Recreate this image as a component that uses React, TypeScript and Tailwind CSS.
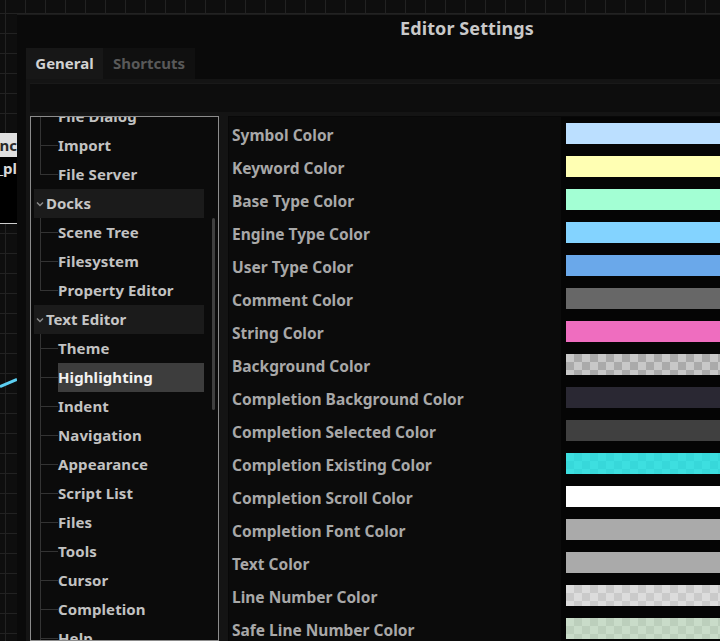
import React from 'react';

type TreeRow =
  | { kind: 'cat'; label: string }
  | { kind: 'item'; label: string; last?: boolean; selected?: boolean };

const TREE: TreeRow[] = [
  { kind: 'item', label: 'File Dialog' },
  { kind: 'item', label: 'Import' },
  { kind: 'item', label: 'File Server', last: true },
  { kind: 'cat', label: 'Docks' },
  { kind: 'item', label: 'Scene Tree' },
  { kind: 'item', label: 'Filesystem' },
  { kind: 'item', label: 'Property Editor', last: true },
  { kind: 'cat', label: 'Text Editor' },
  { kind: 'item', label: 'Theme' },
  { kind: 'item', label: 'Highlighting', selected: true },
  { kind: 'item', label: 'Indent' },
  { kind: 'item', label: 'Navigation' },
  { kind: 'item', label: 'Appearance' },
  { kind: 'item', label: 'Script List' },
  { kind: 'item', label: 'Files' },
  { kind: 'item', label: 'Tools' },
  { kind: 'item', label: 'Cursor' },
  { kind: 'item', label: 'Completion' },
  { kind: 'item', label: 'Help' },
];

const PROPS: { label: string; swatch: string }[] = [
  { label: 'Symbol Color', swatch: 'bg-[#bbdfff]' },
  { label: 'Keyword Color', swatch: 'bg-[#ffffb3]' },
  { label: 'Base Type Color', swatch: 'bg-[#a3ffd4]' },
  { label: 'Engine Type Color', swatch: 'bg-[#83d3ff]' },
  { label: 'User Type Color', swatch: 'bg-[#6aa8ea]' },
  { label: 'Comment Color', swatch: 'bg-[#676767]' },
  { label: 'String Color', swatch: 'bg-[#ef6dbf]' },
  { label: 'Background Color', swatch: 'bg-[conic-gradient(#aaaaaa_25%,#c8c8c8_0_50%,#aaaaaa_0_75%,#c8c8c8_0)] bg-[size:16px_16px]' },
  { label: 'Completion Background Color', swatch: 'bg-[#2a2833]' },
  { label: 'Completion Selected Color', swatch: 'bg-[#404040]' },
  { label: 'Completion Existing Color', swatch: 'bg-[conic-gradient(#37d8da_25%,#3ddfe0_0_50%,#37d8da_0_75%,#3ddfe0_0)] bg-[size:16px_16px]' },
  { label: 'Completion Scroll Color', swatch: 'bg-[#ffffff]' },
  { label: 'Completion Font Color', swatch: 'bg-[#aaaaaa]' },
  { label: 'Text Color', swatch: 'bg-[#aaaaaa]' },
  { label: 'Line Number Color', swatch: 'bg-[conic-gradient(#cacaca_25%,#dcdcdc_0_50%,#cacaca_0_75%,#dcdcdc_0)] bg-[size:16px_16px]' },
  { label: 'Safe Line Number Color', swatch: 'bg-[conic-gradient(#bccfbc_25%,#c9dcc9_0_50%,#bccfbc_0_75%,#c9dcc9_0)] bg-[size:16px_16px]' },
];

function Chevron() {
  return (
    <svg width="8" height="6" viewBox="0 0 8 6" className="shrink-0">
      <path d="M1 1.5 L4 4.5 L7 1.5" fill="none" stroke="#8a8a8a" strokeWidth="1.5" />
    </svg>
  );
}

function TreeLine({ last }: { last?: boolean }) {
  return (
    <div className="w-[24px] h-full shrink-0 flex flex-col">
      {last ? (
        <div className="ml-[6px] w-[18px] h-1/2 border-l border-b border-[#333333]" />
      ) : (
        <div className="ml-[6px] w-[18px] h-full border-l border-[#333333]">
          <div className="h-1/2 border-b border-[#333333]" />
        </div>
      )}
    </div>
  );
}

function SettingsTree() {
  return (
    <div className="w-[189px] shrink-0 border border-[#8c8c8c] bg-[#0b0b0b] flex overflow-hidden">
      <div className="flex-1 min-w-0 overflow-hidden pl-[3px]">
        <div className="-mt-[15px] flex flex-col">
          {TREE.map((row, i) =>
            row.kind === 'cat' ? (
              <div key={i} className="h-[29px] bg-[#1b1b1b] flex items-center pl-[2px] gap-[2px]">
                <Chevron />
                <span className="text-[15px] font-bold text-[#c6c6c6] leading-none">{row.label}</span>
              </div>
            ) : (
              <div key={i} className="h-[29px] flex items-stretch">
                <TreeLine last={row.last} />
                <div
                  className={`flex-1 flex items-center text-[15px] font-bold leading-none whitespace-nowrap tracking-[0.1px] ${
                    row.selected ? 'bg-[#3d3d3d] text-[#f2f2f2]' : 'text-[#c2c2c2]'
                  }`}
                >
                  {row.label}
                </div>
              </div>
            )
          )}
        </div>
      </div>
      <div className="w-[14px] shrink-0 pl-[8px]">
        <div className="mt-[101px] h-[192px] w-[3px] rounded-full bg-[#3f3f3f]" />
      </div>
    </div>
  );
}

function Inspector() {
  return (
    <div className="flex-1 min-w-0 bg-[#0b0b0b] border-l border-t border-[#080808] flex flex-col overflow-hidden">
      {PROPS.map(p => (
        <div key={p.label} className="h-[33px] shrink-0 flex">
          <div className="w-[332px] shrink-0 pl-[3px] pt-[4px] flex items-center text-[15.5px] font-bold text-[#a8a8a8] whitespace-nowrap">
            {p.label}
          </div>
          <div className="flex-1 bg-[#050505] pl-[5px] pt-[6px] pb-[6px]">
            <div className={`h-[21px] w-full ${p.swatch}`} />
          </div>
        </div>
      ))}
    </div>
  );
}

export default function App() {
  return (
    <div className="relative w-[720px] h-[641px] overflow-hidden bg-[#0e0e0e] bg-[linear-gradient(to_right,#222222_1px,transparent_1px),linear-gradient(to_bottom,#222222_1px,transparent_1px)] bg-[size:20px_20px] bg-[position:5px_13px] font-['Noto_Sans',sans-serif] flex flex-col">
      {/* canvas bits peeking out behind the dialog */}
      <div className="absolute left-0 top-[133px] w-[17px] flex flex-col overflow-hidden">
        <div className="h-[24px] bg-[#e0e0e0] flex items-center justify-end text-[15px] font-bold text-[#2a2a2a] leading-none">
          unc
        </div>
        <div className="h-[67px] bg-[#000000] border-b border-[#cfcfcf] flex justify-end pt-[4px] text-[15px] font-bold text-[#d8d8d8] leading-none">
          _pl
        </div>
      </div>
      <svg className="absolute left-0 top-[376px]" width="17" height="14" viewBox="0 0 17 14">
        <path d="M0 10.5 L17 3.5" stroke="#5ccff2" strokeWidth="3" />
      </svg>

      <div className="h-[14px] shrink-0" />
      <div className="flex-1 min-h-0 flex">
        <div className="w-[17px] shrink-0" />
        <div className="relative flex-1 min-w-0 bg-[#0a0a0a] border-t border-[#1c1c1c] flex flex-col">
          <div className="h-[33px] shrink-0 flex items-center pl-[383px] pb-[7px]">
            <span className="text-[18px] font-bold text-[#c9c9c9] leading-none tracking-[0.1px]">Editor Settings</span>
          </div>
          <div className="flex-1 min-h-0 pl-[9px] flex flex-col">
            <div className="h-[31px] shrink-0 flex">
              <div className="w-[77px] bg-[#171717] flex items-center justify-center text-[15px] font-bold text-[#d2d2d2]">
                General
              </div>
              <div className="w-[92px] bg-[#101010] flex items-center justify-center text-[15px] font-bold text-[#595959]">
                Shortcuts
              </div>
            </div>
            <div className="flex-1 min-h-0 bg-[#141414] pl-[4px] pt-[4px] flex flex-col gap-[4px]">
              <div className="h-[29px] shrink-0 bg-[#0d0d0d] border-t border-[#191919]" />
              <div className="flex-1 min-h-0 flex gap-[9px]">
                <SettingsTree />
                <Inspector />
              </div>
            </div>
          </div>
        </div>
      </div>
    </div>
  );
}
